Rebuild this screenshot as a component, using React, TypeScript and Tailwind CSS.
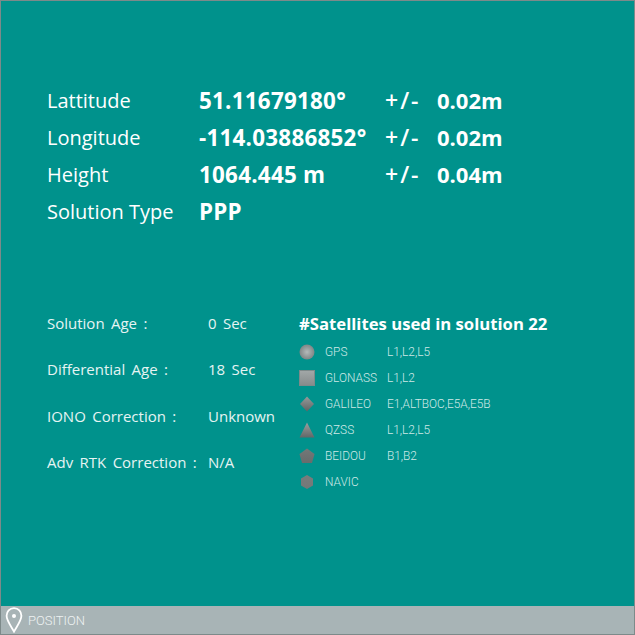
import React from "react";

const primary = [
  ["Lattitude", "51.11679180°", "0.02m"],
  ["Longitude", "-114.03886852°", "0.02m"],
  ["Height", "1064.445 m", "0.04m"],
  ["Solution Type", "PPP", ""],
];

const secondary = [
  ["Solution Age :", "0 Sec"],
  ["Differential Age :", "18 Sec"],
  ["IONO Correction :", "Unknown"],
  ["Adv RTK Correction :", "N/A"],
];

function Shape({ kind }: { kind: string }) {
  const id = `grad-${kind}`;
  const shapes: Record<string, React.ReactNode> = {
    gps: <circle cx="8" cy="8" r="7.5" fill={`url(#${id})`} />,
    glonass: <rect x="0.5" y="0.5" width="15" height="15" fill={`url(#${id})`} stroke="#7d8a8a" />,
    galileo: <polygon points="8,0.5 15,8 8,15.5 1,8" fill={`url(#${id})`} />,
    qzss: <polygon points="8,0.5 15.5,15.5 0.5,15.5" fill={`url(#${id})`} />,
    beidou: <polygon points="8,0.5 15.5,6 13,15 3,15 0.5,6" fill={`url(#${id})`} />,
    navic: <polygon points="8,1 14,4.5 14,11.5 8,15 2,11.5 2,4.5" fill={`url(#${id})`} />,
  };
  const stops: Record<string, [string, string]> = {
    glonass: ["#a2a8a8", "#868b8b"],
    galileo: ["#969a9a", "#5f6464"],
    qzss: ["#9a9e9e", "#636868"],
    beidou: ["#747878", "#686c6c"],
    navic: ["#787c7c", "#747878"],
  };
  return (
    <svg width="16" height="16" viewBox="0 0 16 16" className="mb-[2px] shrink-0">
      <defs>
        {kind === "gps" ? (
          <radialGradient id={id}>
            <stop offset="0" stopColor="#b4baba" />
            <stop offset="1" stopColor="#7f8686" />
          </radialGradient>
        ) : (
          <linearGradient id={id} x1="0" y1="0" x2="0" y2="1">
            <stop offset="0" stopColor={stops[kind][0]} />
            <stop offset="1" stopColor={stops[kind][1]} />
          </linearGradient>
        )}
      </defs>
      {shapes[kind]}
    </svg>
  );
}

const sats = [
  ["gps", "GPS", "L1,L2,L5"],
  ["glonass", "GLONASS", "L1,L2"],
  ["galileo", "GALILEO", "E1,ALTBOC,E5A,E5B"],
  ["qzss", "QZSS", "L1,L2,L5"],
  ["beidou", "BEIDOU", "B1,B2"],
  ["navic", "NAVIC", ""],
];

export default function App() {
  return (
    <div className="flex h-[635px] w-[635px] flex-col overflow-hidden border border-[#7d8a8a] bg-[#00928c] font-['Open_Sans','Noto_Sans',sans-serif] text-white">
      <div className="flex-1 pl-[46px]">
        <div className="flex flex-col pt-[81px]">
          {primary.map(([l, v, e]) => (
            <div key={l} className="flex h-[37px] items-center text-[20px]">
              <span className="w-[152px]">{l}</span>
              <span className="w-[186px] text-[22.4px] font-bold tracking-[0.25px]">{v}</span>
              {e && <span className="w-[52px] text-[23px] font-semibold tracking-[2px]">+/-</span>}
              {e && <span className="text-[22px] font-bold">{e}</span>}
            </div>
          ))}
        </div>
        <div className="mt-[71px] flex">
          <div className="flex w-[252px] flex-col text-[15px] text-[#e6f4f3]">
            {secondary.map(([l, v]) => (
              <div key={l} className="flex h-[46.4px] items-center pb-[2px] [word-spacing:2.5px]">
                <span className="w-[161px]">{l}</span>
                <span>{v}</span>
              </div>
            ))}
          </div>
          <div className="flex flex-col">
            <div className="h-[39px] pt-[13px] text-[16.7px] leading-[20px] font-bold">
              #Satellites used in solution 22
            </div>
            <div className="flex flex-col">
              {sats.map(([k, n, b]) => (
                <div key={k} className="flex h-[26px] items-center font-['Roboto',sans-serif] text-[11.85px] font-light text-[#cfe9e7]">
                  <Shape kind={k} />
                  <span className="ml-[10px] w-[62px]">{n}</span>
                  <span>{b}</span>
                </div>
              ))}
            </div>
          </div>
        </div>
      </div>
      <div className="flex h-[28px] items-center gap-[5px] bg-[#a8b4b6] pl-[4px] font-['Roboto',sans-serif] text-[13px] font-light text-[#eef2f2]">
        <svg width="18" height="26" viewBox="0 0 18 26" fill="none" className="shrink-0">
          <path d="M9 1.2C4.6 1.2 1.6 4.6 1.6 8.8 1.6 13.8 6.4 19.6 9 24.6 11.6 19.6 16.4 13.8 16.4 8.8 16.4 4.6 13.4 1.2 9 1.2Z" stroke="#ffffff" strokeWidth="1.8" />
          <circle cx="9" cy="9" r="2" fill="#ffffff" />
        </svg>
        <span className="pt-[1px]">POSITION</span>
      </div>
    </div>
  );
}
